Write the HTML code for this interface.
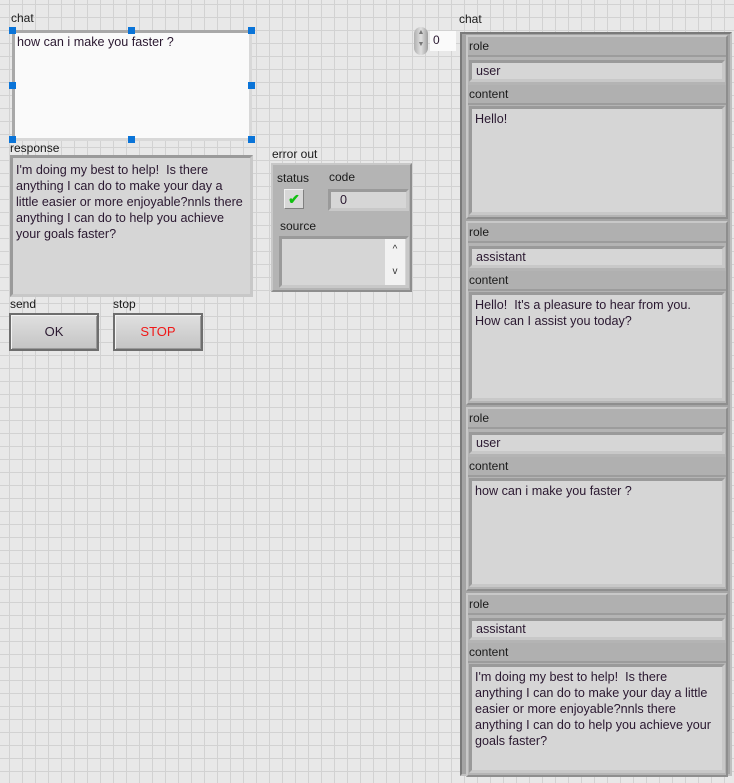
<!DOCTYPE html>
<html><head><meta charset="utf-8"><style>
*{box-sizing:border-box;margin:0;padding:0}
body{width:734px;height:783px;overflow:hidden;position:relative;font-family:"Liberation Sans",sans-serif;font-size:12px;color:#2a1830;
background-color:#e8e8e8;
background-image:linear-gradient(to right,#d2d2d2 1px,transparent 1px),linear-gradient(to bottom,#d2d2d2 1px,transparent 1px);
background-size:13px 13px;background-position:9px 4px}
.a{position:absolute}
.lbl{position:absolute;font-size:12px;color:#1a1a1a;line-height:14px}
.box{position:absolute;background:#d6d6d6;border:3px solid;border-color:#9a9a9a #c8c8c8 #c8c8c8 #9a9a9a;padding:2px 3px;line-height:16px;font-size:12.6px}
.h{position:absolute;width:7px;height:7px;background:#0a74d8}
.btn{position:absolute;width:90px;height:38px;background:linear-gradient(#e0e0e0,#c4c4c4);border:2px solid #6e6e6e;box-shadow:inset 1px 1px 0 #f4f4f4,inset -1px -1px 0 #999;text-align:center;line-height:34px;font-size:13px}
.cl{position:absolute;left:466px;width:262px;height:184px;background:#b4b4b4;border:2px solid;border-color:#c8c8c8 #8e8e8e #8e8e8e #c8c8c8}
.band{position:absolute;left:0;width:258px;height:20px;background:#b0b0b0;border-bottom:2px solid #9c9c9c;padding-left:1px;line-height:18px;color:#1a1a1a}
</style></head><body>
<div class="lbl" style="left:11px;top:11px">chat</div>
<div class="a" style="left:12px;top:30px;width:240px;height:111px;background:#fafafa;border:3px solid;border-color:#a8a8a8 #d8d8d8 #d8d8d8 #a8a8a8;padding:2px 2px;line-height:15px;font-size:12.6px">how can i make you faster ?</div>
<div class="h" style="left:9px;top:27px"></div><div class="h" style="left:128px;top:27px"></div><div class="h" style="left:248px;top:27px"></div>
<div class="h" style="left:9px;top:82px"></div><div class="h" style="left:248px;top:82px"></div>
<div class="h" style="left:9px;top:136px"></div><div class="h" style="left:128px;top:136px"></div><div class="h" style="left:248px;top:136px"></div>
<div class="lbl" style="left:10px;top:141px">response</div>
<div class="box" style="left:10px;top:155px;width:243px;height:142px;padding:4px 3px 0 3px">I'm doing my best to help!&nbsp; Is there anything I can do to make your day a little easier or more enjoyable?nnls there anything I can do to help you achieve your goals faster?</div>
<div class="lbl" style="left:10px;top:297px">send</div>
<div class="lbl" style="left:113px;top:297px">stop</div>
<div class="btn" style="left:9px;top:313px">OK</div>
<div class="btn" style="left:113px;top:313px;color:#f01818">STOP</div>

<div class="lbl" style="left:272px;top:147px">error out</div>
<div class="a" style="left:271px;top:163px;width:141px;height:129px;background:#b4b4b4;border:2px solid;border-color:#c8c8c8 #8e8e8e #8e8e8e #c8c8c8"></div>
<div class="lbl" style="left:277px;top:171px">status</div>
<div class="lbl" style="left:329px;top:170px">code</div>
<div class="a" style="left:284px;top:189px;width:20px;height:20px;background:#d8d8d8;border:1px solid;border-color:#f0f0f0 #808080 #808080 #f0f0f0;color:#10c010;font-size:14px;line-height:18px;text-align:center;font-weight:bold">✔</div>
<div class="box" style="left:328px;top:189px;width:81px;height:22px;padding:0 0 0 9px;line-height:16px">0</div>
<div class="lbl" style="left:280px;top:219px">source</div>
<div class="box" style="left:279px;top:236px;width:130px;height:52px"></div>
<div class="a" style="left:385px;top:239px;width:20px;height:46px;background:#f2f2f2;font-size:10px;text-align:center;line-height:22px;color:#333">^<br>v</div>

<div class="a" style="left:414px;top:27px;width:14px;height:28px;border-radius:7px;background:linear-gradient(90deg,#b0b0b0,#e0e0e0,#a0a0a0);font-size:7px;line-height:12px;text-align:center;color:#777">▲<br>▼</div>
<div class="a" style="left:430px;top:31px;width:26px;height:20px;background:#fafafa;padding:1px 3px;line-height:17px">0</div>
<div class="lbl" style="left:459px;top:12px">chat</div>
<div class="a" style="left:460px;top:32px;width:272px;height:744px;background:#a4a4a4;border:2px solid;border-color:#7a7a7a #c0c0c0 #c0c0c0 #7a7a7a"></div>

<div class="cl" style="top:35px">
 <div class="band" style="top:0">role</div>
 <div class="box" style="left:1px;top:23px;width:256px;height:22px;padding:0 4px;line-height:16px">user</div>
 <div class="band" style="top:48px">content</div>
 <div class="box" style="left:1px;top:69px;width:256px;height:109px">Hello!</div>
</div>
<div class="cl" style="top:221px">
 <div class="band" style="top:0">role</div>
 <div class="box" style="left:1px;top:23px;width:256px;height:22px;padding:0 4px;line-height:16px">assistant</div>
 <div class="band" style="top:48px">content</div>
 <div class="box" style="left:1px;top:69px;width:256px;height:109px">Hello!&nbsp; It's a pleasure to hear from you.<br>How can I assist you today?</div>
</div>
<div class="cl" style="top:407px">
 <div class="band" style="top:0">role</div>
 <div class="box" style="left:1px;top:23px;width:256px;height:22px;padding:0 4px;line-height:16px">user</div>
 <div class="band" style="top:48px">content</div>
 <div class="box" style="left:1px;top:69px;width:256px;height:109px">how can i make you faster ?</div>
</div>
<div class="cl" style="top:593px">
 <div class="band" style="top:0">role</div>
 <div class="box" style="left:1px;top:23px;width:256px;height:22px;padding:0 4px;line-height:16px">assistant</div>
 <div class="band" style="top:48px">content</div>
 <div class="box" style="left:1px;top:69px;width:256px;height:109px">I'm doing my best to help!&nbsp; Is there<br>anything I can do to make your day a little<br>easier or more enjoyable?nnls there<br>anything I can do to help you achieve your<br>goals faster?</div>
</div>
</body></html>
